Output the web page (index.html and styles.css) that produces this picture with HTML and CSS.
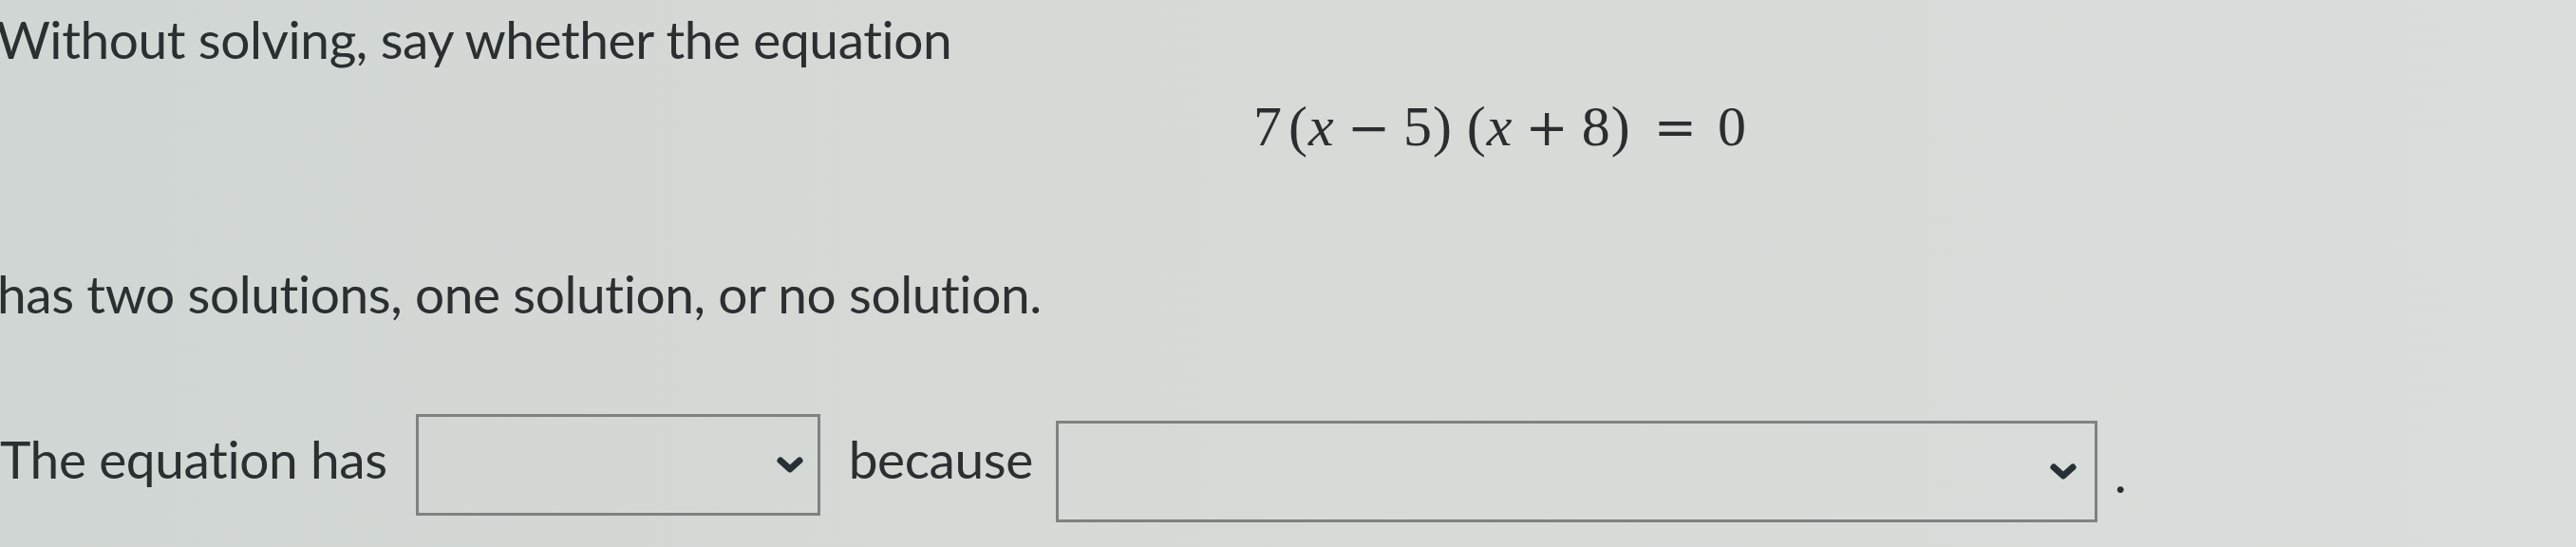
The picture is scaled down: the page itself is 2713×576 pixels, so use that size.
FILE: index.html
```html
<!DOCTYPE html>
<html lang="en">
<head>
<meta charset="utf-8">
<title>Equation question</title>
<link rel="stylesheet" href="styles.css">
</head>
<body>
<main class="question">
  <p class="line line-intro">Without solving, say whether the equation</p>
  <div class="equation"><span class="num lead">7</span><span class="group"><span class="paren">(</span><i>x</i><span class="op">−</span>5<span class="paren">)</span></span><span class="group"><span class="paren">(</span><i>x</i><span class="op">+</span>8<span class="paren">)</span></span><span class="op eq">=</span>0</div>
  <p class="line line-options">has two solutions, one solution, or no solution.</p>
  <div class="answer-row">
    <span class="label">The equation has</span>
    <div class="select select-count">
      <svg class="chevron" viewBox="0 0 30 20" aria-hidden="true"><path d="M5 5 L15 14 L25 5" /></svg>
    </div>
    <span class="label label-because">because</span>
    <div class="select select-reason">
      <svg class="chevron" viewBox="0 0 30 20" aria-hidden="true"><path d="M5 5 L15 14 L25 5" /></svg>
    </div>
    <span class="period">.</span>
  </div>
</main>
</body>
</html>
```

FILE: styles.css
```css
html, body {
  margin: 0;
  padding: 0;
}

body {
  width: 2713px;
  height: 576px;
  overflow: hidden;
  background: linear-gradient(90deg, #d0d6d3 0%, #d5dad7 40%, #d9dddb 100%);
  color: #2a2f31;
  font-family: "Lato", "Noto Sans", sans-serif;
}

.question {
  padding: 8px 0 0 0;
}

.line {
  margin: 0;
  font-size: 55px;
  line-height: 66px;
  letter-spacing: -0.4px;
  white-space: nowrap;
}

.line-intro {
  margin-left: -4px;
}

.equation {
  margin: 26px 0 0 1320px;
  font-family: "Liberation Serif", "Times New Roman", serif;
  font-size: 60px;
  line-height: 66px;
  white-space: nowrap;
  color: #2a2e30;
}

.equation i {
  font-style: italic;
}

.equation .lead {
  margin-right: 6px;
}

.equation .group + .group {
  margin-left: 14px;
}

.equation .paren {
  margin: 0 1px;
}

.equation .op {
  font-family: "DejaVu Serif", "Liberation Serif", serif;
  font-size: 54px;
  margin: 0 14px;
}

.equation .eq {
  margin: 0 22px 0 24px;
}

.line-options {
  margin-top: 108px;
  margin-left: -3px;
}

.answer-row {
  display: flex;
  align-items: center;
  margin-top: 87px;
  font-size: 55px;
  line-height: 66px;
  letter-spacing: -0.4px;
}

.label {
  white-space: nowrap;
  margin-bottom: 14px;
}

.select {
  box-sizing: border-box;
  height: 107px;
  border: 3px solid #7e8381;
  display: flex;
  align-items: center;
  justify-content: flex-end;
  background: transparent;
}

.select-count {
  width: 426px;
  margin-left: 30px;
  padding-right: 14px;
}

.label-because {
  margin-left: 30px;
}

.select-reason {
  width: 1097px;
  margin-left: 24px;
  padding-right: 18px;
  margin-top: 14px;
}

.chevron {
  width: 30px;
  height: 20px;
  fill: none;
  stroke: #263035;
  stroke-width: 7;
  stroke-linecap: round;
  stroke-linejoin: round;
}

.period {
  margin-left: 18px;
  margin-top: 16px;
}
```
